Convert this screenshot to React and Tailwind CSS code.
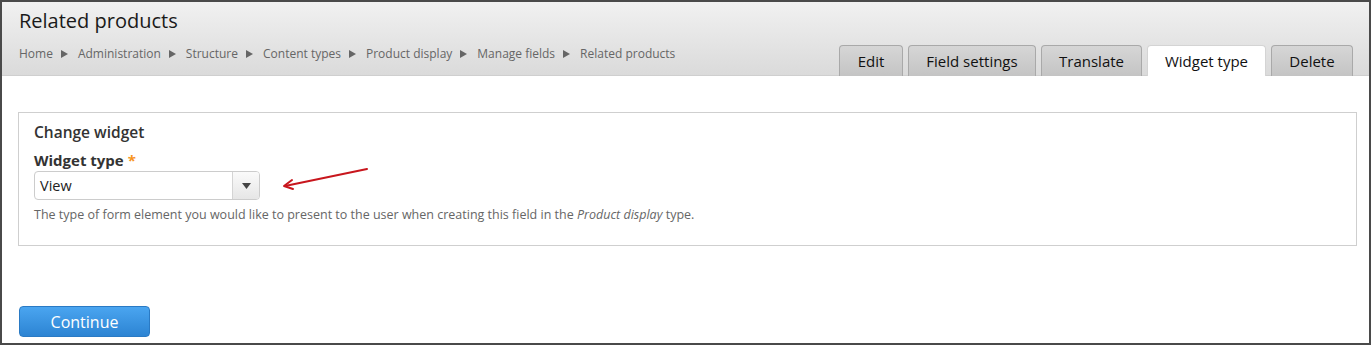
import React from "react";

const crumbs = [
  "Home",
  "Administration",
  "Structure",
  "Content types",
  "Product display",
  "Manage fields",
  "Related products",
];

const tabs = [
  { label: "Edit", w: "w-[64px]" },
  { label: "Field settings", w: "w-[128px]" },
  { label: "Translate", w: "w-[101px]" },
  { label: "Widget type", w: "w-[119px]", active: true },
  { label: "Delete", w: "w-[82px]" },
];

const App = () => {
  return (
    <div className="relative h-[345px] w-[1371px] border-2 border-[#4a4a4a] bg-white font-['Open_Sans',sans-serif] text-[#333]">
      {/* Header */}
      <div className="flex h-[74px] flex-col bg-gradient-to-b from-[#f1f1f1] to-[#dadada] shadow-[inset_0_-1px_0_#cfcfcf]">
        <h1 className="pl-[17px] pt-[7px] text-[20px] leading-[24px] text-[#1a1a1a]">Related products</h1>
        <div className="mt-auto flex items-end justify-between pl-[17px] pr-[16px]">
          <div className="mb-[14px] flex items-center text-[12px] leading-[16px] text-[#666]">
            {crumbs.map((c, i) => (
              <React.Fragment key={c}>
                <span>{c}</span>
                {i < crumbs.length - 1 && (
                  <svg className="ml-[8px] mr-[10px]" width="7" height="8" viewBox="0 0 7 8">
                    <polygon points="0,0 7,4 0,8" fill="#666" />
                  </svg>
                )}
              </React.Fragment>
            ))}
          </div>
          <div className="flex gap-[5px]">
            {tabs.map((t) => (
              <div
                key={t.label}
                className={
                  t.active
                    ? `${t.w} flex h-[31px] items-center justify-center rounded-t-[4px] border border-b-0 border-[#d4d4d4] bg-white text-[15px] text-[#111]`
                    : `${t.w} flex h-[31px] items-center justify-center rounded-t-[4px] border border-b-0 border-[#a9a9a9] bg-gradient-to-b from-[#d6d6d6] to-[#c4c4c4] text-[15px] text-[#111]`
                }
              >
                {t.label}
              </div>
            ))}
          </div>
        </div>
      </div>

      {/* Fieldset */}
      <div className="ml-[16px] mr-[12px] mt-[36px] h-[134px] border border-[#cfcfcf] px-[15px] pt-[8px]">
        <div className="text-[15.5px] font-semibold leading-[22px] text-[#333]">Change widget</div>
        <div className="mt-[7px] text-[15px] font-bold leading-[20px] text-[#333]">
          Widget type <span className="text-[#f7941d]">*</span>
        </div>
        <div className="mt-[1px] flex h-[29px] w-[226px] items-center overflow-hidden rounded-[4px] border border-[#ccc] bg-white">
          <span className="flex-1 pl-[5px] text-[14.5px] text-[#222]">View</span>
          <div className="flex h-full w-[27px] items-center justify-center border-l border-[#d4d4d4] bg-gradient-to-b from-[#fafafa] to-[#e6e6e6]">
            <svg width="9" height="6" viewBox="0 0 9 6">
              <polygon points="0,0 9,0 4.5,6" fill="#444" />
            </svg>
          </div>
        </div>
        <p className="mt-[7px] text-[12.5px] leading-[16px] text-[#666]">
          The type of form element you would like to present to the user when creating this field in the <em>Product display</em> type.
        </p>
      </div>

      {/* Annotation arrow */}
      <svg className="absolute left-[278px] top-[164px]" width="92" height="26" viewBox="0 0 92 26">
        <line x1="87" y1="3" x2="5" y2="20" stroke="#c8161d" strokeWidth="2" strokeLinecap="round" />
        <polyline points="12,14 4,20 13,23" fill="none" stroke="#c8161d" strokeWidth="2" strokeLinecap="round" strokeLinejoin="round" />
      </svg>

      {/* Actions */}
      <div className="ml-[17px] mt-[60px]">
        <button className="flex h-[31px] w-[131px] items-center justify-center rounded-[4px] border border-[#2a7ac4] bg-gradient-to-b from-[#4aa5f0] to-[#2c84d3] text-[16px] text-white">
          Continue
        </button>
      </div>
    </div>
  );
};

export default App;
